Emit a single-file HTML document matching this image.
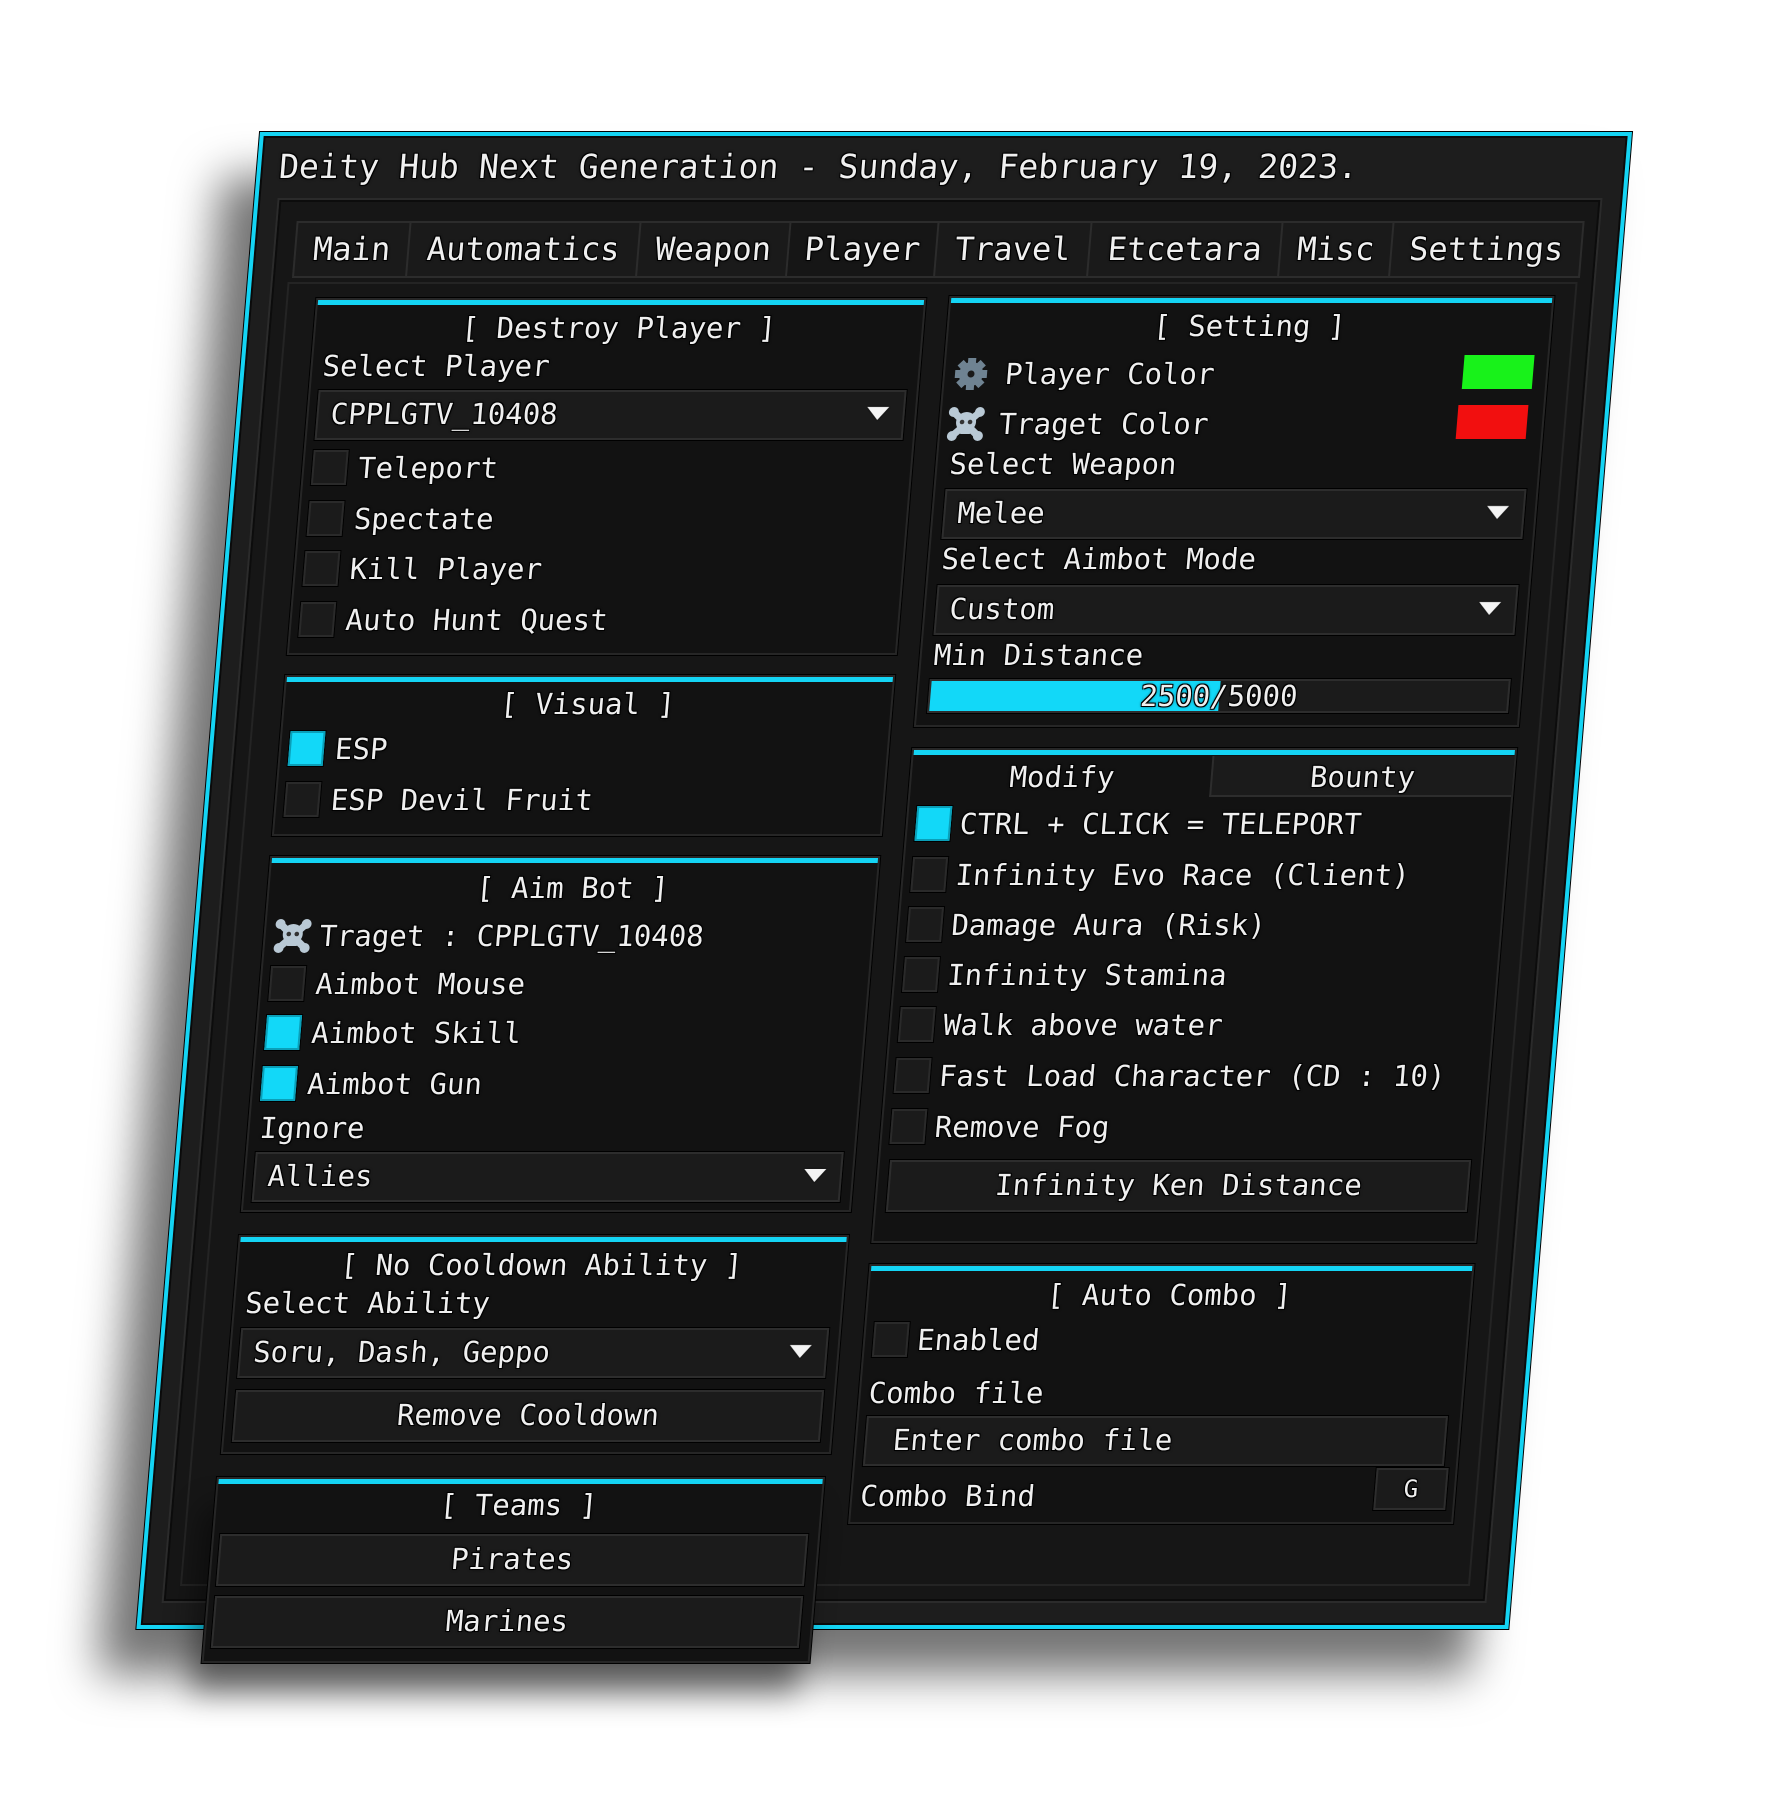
<!DOCTYPE html>
<html><head><meta charset="utf-8">
<style>
html,body{margin:0;padding:0;background:#fff;}
body{width:1767px;height:1794px;position:relative;overflow:hidden;font-family:"DejaVu Sans Mono","Liberation Mono",monospace;}
.win{position:absolute;left:260px;top:132px;width:1372px;height:1497px;transform:skewX(-4.72deg);transform-origin:0 0;}
.frame{position:absolute;left:0;top:0;width:1364px;height:1489px;background:#1d1d1d;border:4px solid #14d4f4;box-shadow:0 0 0 1px #000,inset 0 0 0 2px #0a0a0a,-35px 45px 45px rgba(0,0,0,.55);}
.t{position:absolute;color:#efefef;font-size:29px;line-height:36px;height:36px;white-space:pre;text-shadow:-1px -1px 0 #000,1px -1px 0 #000,-1px 1px 0 #000,1px 1px 0 #000,0 0 3px #000;}
.title{font-size:33.2px;}
.inner{position:absolute;left:23px;top:66px;width:1321px;height:1401px;background:#161616;border:2px solid #2b2b2b;box-shadow:inset 0 0 0 2px #0c0c0c;}
.inner2{position:absolute;left:40px;top:150px;width:1286px;height:1300px;border:2px solid #242424;}
.tabs{position:absolute;left:44px;top:89px;width:1284px;height:53px;background:#1a1a1a;border:2px solid #2c2c2c;display:flex;}
.tab{height:53px;border-right:2px solid #2c2c2c;position:relative;box-sizing:border-box;}
.tab span{position:absolute;left:0;right:0;top:8px;text-align:center;font-size:32px;}
.p{position:absolute;background:#121212;border:2px solid #262626;box-shadow:0 0 0 1px #000;}
.p:before{content:"";position:absolute;left:0;right:0;top:0;height:5px;background:#14d4f4;}
.c{text-align:center;left:0;right:0;}
.cb{position:absolute;width:31px;height:31px;background:#1b1b1b;border:2px solid #2a2a2a;box-shadow:0 0 0 1px #000;}
.cb.on{background:#12d8f8;border-color:#0a9fb8;}
.dd{position:absolute;height:46px;background:#1b1b1b;border:2px solid #2d2d2d;box-shadow:0 0 0 1px #000;}
.dd .t{left:12px;top:4px;}
.arr{position:absolute;right:14px;top:15px;width:0;height:0;border-left:11px solid transparent;border-right:11px solid transparent;border-top:13px solid #f4f4f4;filter:drop-shadow(0 0 1px #000);}
.btn{position:absolute;height:48px;background:#1b1b1b;border:2px solid #2d2d2d;box-shadow:0 0 0 1px #000;}
.btn .t{left:0;right:0;text-align:center;top:5px;}
</style></head><body>
<div class="win">
 <div class="frame"></div>
 <div class="t title" style="left:22px;top:17px;">Deity Hub Next Generation - Sunday, February 19, 2023.</div>
 <div class="inner"></div>
 <div class="inner2"></div>
 <div class="tabs">
  <div class="tab" style="width:113px"><span class="t" style="font-size:32px">Main</span></div>
  <div class="tab" style="width:230px"><span class="t" style="font-size:32px">Automatics</span></div>
  <div class="tab" style="width:150px"><span class="t" style="font-size:32px">Weapon</span></div>
  <div class="tab" style="width:148px;background:#161616"><span class="t" style="font-size:32px">Player</span></div>
  <div class="tab" style="width:153px"><span class="t" style="font-size:32px">Travel</span></div>
  <div class="tab" style="width:191px"><span class="t" style="font-size:32px">Etcetara</span></div>
  <div class="tab" style="width:111px"><span class="t" style="font-size:32px">Misc</span></div>
  <div class="tab" style="width:188px;border-right:none"><span class="t" style="font-size:32px">Settings</span></div>
 </div>

 <!-- Destroy Player -->
 <div class="p" style="left:70px;top:166px;width:606px;height:353px;">
  <div class="t c" style="top:10px">[ Destroy Player ]</div>
  <div class="t" style="left:10px;top:48px">Select Player</div>
  <div class="dd" style="left:8px;right:10px;top:90px"><div class="t">CPPLGTV_10408</div><div class="arr"></div></div>
  <div class="cb" style="left:8px;top:150px"></div><div class="t" style="left:54px;top:150px">Teleport</div>
  <div class="cb" style="left:8px;top:201px"></div><div class="t" style="left:54px;top:201px">Spectate</div>
  <div class="cb" style="left:8px;top:251px"></div><div class="t" style="left:54px;top:251px">Kill Player</div>
  <div class="cb" style="left:8px;top:302px"></div><div class="t" style="left:54px;top:302px">Auto Hunt Quest</div>
 </div>

 <!-- Visual -->
 <div class="p" style="left:70px;top:543px;width:606px;height:157px;">
  <div class="t c" style="top:9px">[ Visual ]</div>
  <div class="cb on" style="left:8px;top:54px"></div><div class="t" style="left:54px;top:54px">ESP</div>
  <div class="cb" style="left:8px;top:105px"></div><div class="t" style="left:54px;top:105px">ESP Devil Fruit</div>
 </div>

 <!-- Aim Bot -->
 <div class="p" style="left:70px;top:724px;width:606px;height:352px;">
  <div class="t c" style="top:12px">[ Aim Bot ]</div>
  <svg style="position:absolute;left:8px;top:60px" width="38" height="36" viewBox="0 0 38 36"><g fill="#b9c9d5"><circle cx="6" cy="6" r="5"/><circle cx="32" cy="6" r="5"/><circle cx="6" cy="30" r="5"/><circle cx="32" cy="30" r="5"/><path d="M6 6 L32 30 M32 6 L6 30" stroke="#b9c9d5" stroke-width="7"/><circle cx="19" cy="16" r="10"/><rect x="13" y="20" width="12" height="8" rx="2"/></g><circle cx="15" cy="16" r="2.3" fill="#333"/><circle cx="23" cy="16" r="2.3" fill="#333"/></svg>
  <div class="t" style="left:54px;top:60px">Traget : CPPLGTV_10408</div>
  <div class="cb" style="left:8px;top:108px"></div><div class="t" style="left:54px;top:108px">Aimbot Mouse</div>
  <div class="cb on" style="left:8px;top:157px"></div><div class="t" style="left:54px;top:157px">Aimbot Skill</div>
  <div class="cb on" style="left:8px;top:208px"></div><div class="t" style="left:54px;top:208px">Aimbot Gun</div>
  <div class="t" style="left:10px;top:252px">Ignore</div>
  <div class="dd" style="left:8px;right:10px;top:294px"><div class="t">Allies</div><div class="arr"></div></div>
 </div>

 <!-- No Cooldown -->
 <div class="p" style="left:70px;top:1103px;width:606px;height:215px;">
  <div class="t c" style="top:10px">[ No Cooldown Ability ]</div>
  <div class="t" style="left:10px;top:48px">Select Ability</div>
  <div class="dd" style="left:8px;right:10px;top:91px"><div class="t">Soru, Dash, Geppo</div><div class="arr"></div></div>
  <div class="btn" style="left:8px;right:10px;top:153px"><div class="t">Remove Cooldown</div></div>
 </div>

 <!-- Teams -->
 <div class="p" style="left:68px;top:1345px;width:604px;height:182px;box-shadow:0 0 0 1px #000,-10px 30px 30px rgba(0,0,0,.45);">
  <div class="t c" style="top:8px">[ Teams ]</div>
  <div class="btn" style="left:6px;right:10px;top:55px"><div class="t">Pirates</div></div>
  <div class="btn" style="left:6px;right:10px;top:117px"><div class="t">Marines</div></div>
 </div>

 <!-- Setting -->
 <div class="p" style="left:703px;top:164px;width:601px;height:427px;">
  <div class="t c" style="top:10px">[ Setting ]</div>
  <svg style="position:absolute;left:8px;top:58px" width="36" height="36" viewBox="0 0 36 36"><g fill="#6f8392"><circle cx="18" cy="18" r="12"/><rect x="14" y="2" width="8" height="8"/><rect x="14" y="26" width="8" height="8"/><rect x="2" y="14" width="8" height="8"/><rect x="26" y="14" width="8" height="8"/><g transform="rotate(45 18 18)"><rect x="14" y="2" width="8" height="8"/><rect x="14" y="26" width="8" height="8"/><rect x="2" y="14" width="8" height="8"/><rect x="26" y="14" width="8" height="8"/></g></g><circle cx="18" cy="18" r="3.5" fill="#1a1a1a"/></svg>
  <div class="t" style="left:60px;top:58px">Player Color</div>
  <div style="position:absolute;left:518px;top:57px;width:70px;height:34px;background:#18f21a;"></div>
  <svg style="position:absolute;left:6px;top:108px" width="38" height="36" viewBox="0 0 38 36"><g fill="#b9c9d5"><circle cx="6" cy="6" r="5"/><circle cx="32" cy="6" r="5"/><circle cx="6" cy="30" r="5"/><circle cx="32" cy="30" r="5"/><path d="M6 6 L32 30 M32 6 L6 30" stroke="#b9c9d5" stroke-width="7"/><circle cx="19" cy="16" r="10"/><rect x="13" y="20" width="12" height="8" rx="2"/></g><circle cx="15" cy="16" r="2.3" fill="#333"/><circle cx="23" cy="16" r="2.3" fill="#333"/></svg>
  <div class="t" style="left:58px;top:108px">Traget Color</div>
  <div style="position:absolute;left:516px;top:107px;width:70px;height:34px;background:#f20f0f;"></div>
  <div class="t" style="left:12px;top:148px">Select Weapon</div>
  <div class="dd" style="left:10px;right:10px;top:191px"><div class="t">Melee</div><div class="arr"></div></div>
  <div class="t" style="left:12px;top:243px">Select Aimbot Mode</div>
  <div class="dd" style="left:10px;right:10px;top:287px"><div class="t">Custom</div><div class="arr"></div></div>
  <div class="t" style="left:12px;top:339px">Min Distance</div>
  <div style="position:absolute;left:10px;right:10px;top:381px;height:30px;background:#1b1b1b;border:2px solid #2d2d2d;box-shadow:0 0 0 1px #000;">
   <div style="position:absolute;left:0;top:0;bottom:0;width:50%;background:#12d8f8;"></div>
   <div class="t c" style="top:-3px">2500/5000</div>
  </div>
 </div>

 <!-- Modify -->
 <div class="p" style="left:703px;top:616px;width:601px;height:491px;">
  <div style="position:absolute;left:0;top:6px;width:50%;height:41px;"><div class="t c" style="top:3px">Modify</div></div>
  <div style="position:absolute;right:0;top:6px;width:50%;height:39px;background:#1b1b1b;border-left:2px solid #2d2d2d;border-bottom:2px solid #2d2d2d;"><div class="t c" style="top:3px">Bounty</div></div>
  <div class="cb on" style="left:8px;top:56px"></div><div class="t" style="left:52px;top:56px">CTRL + CLICK = TELEPORT</div>
  <div class="cb" style="left:8px;top:107px"></div><div class="t" style="left:52px;top:107px">Infinity Evo Race (Client)</div>
  <div class="cb" style="left:8px;top:157px"></div><div class="t" style="left:52px;top:157px">Damage Aura (Risk)</div>
  <div class="cb" style="left:8px;top:207px"></div><div class="t" style="left:52px;top:207px">Infinity Stamina</div>
  <div class="cb" style="left:8px;top:257px"></div><div class="t" style="left:52px;top:257px">Walk above water</div>
  <div class="cb" style="left:8px;top:308px"></div><div class="t" style="left:52px;top:308px">Fast Load Character (CD : 10)</div>
  <div class="cb" style="left:8px;top:359px"></div><div class="t" style="left:52px;top:359px">Remove Fog</div>
  <div class="btn" style="left:10px;right:10px;top:410px"><div class="t">Infinity Ken Distance</div></div>
 </div>

 <!-- Auto Combo -->
 <div class="p" style="left:703px;top:1132px;width:601px;height:256px;">
  <div class="t c" style="top:11px">[ Auto Combo ]</div>
  <div class="cb" style="left:8px;top:56px"></div><div class="t" style="left:52px;top:56px">Enabled</div>
  <div class="t" style="left:8px;top:109px">Combo file</div>
  <div class="btn" style="left:8px;right:12px;top:150px;height:46px"><div class="t" style="left:26px;right:auto;top:4px">Enter combo file</div></div>
  <div class="t" style="left:8px;top:212px">Combo Bind</div>
  <div class="btn" style="left:522px;width:68px;top:202px;height:38px"><div class="t" style="top:1px;font-size:24px">G</div></div>
 </div>
</div>
</body></html>
